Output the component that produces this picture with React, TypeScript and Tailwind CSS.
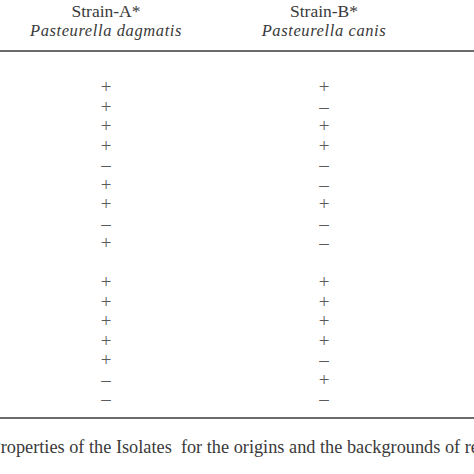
const groupOne = [
  ['+', '+'],
  ['+', '–'],
  ['+', '+'],
  ['+', '+'],
  ['–', '–'],
  ['+', '–'],
  ['+', '+'],
  ['–', '–'],
  ['+', '–'],
];

const groupTwo = [
  ['+', '+'],
  ['+', '+'],
  ['+', '+'],
  ['+', '+'],
  ['+', '–'],
  ['–', '+'],
  ['–', '–'],
];

const serif = { fontFamily: '"Liberation Serif", "DejaVu Serif", serif' };

function Row({ a, b }: { a: string; b: string }) {
  return (
    <div className="grid grid-cols-[212px_224px] h-[19.5px] items-center text-[19px] leading-[19.5px] text-[#5a5a5a]">
      <span className="text-center">{a}</span>
      <span className="text-center">{b}</span>
    </div>
  );
}

export default function App() {
  return (
    <div className="w-[474px] h-[474px] bg-white overflow-hidden" style={serif}>
      <div className="grid grid-cols-[212px_224px] pt-[1px] h-[50px] text-[#3a3a3a]">
        <div className="flex flex-col items-center">
          <span className="text-[17.5px] leading-[20px]">Strain-A*</span>
          <span className="text-[16.5px] leading-[19px] italic tracking-[0.6px]">Pasteurella dagmatis</span>
        </div>
        <div className="flex flex-col items-center">
          <span className="text-[17.5px] leading-[20px]">Strain-B*</span>
          <span className="text-[16.5px] leading-[19px] italic tracking-[0.6px]">Pasteurella canis</span>
        </div>
      </div>
      <div className="h-[2px] bg-[#6b6b6b]" />
      <div className="pt-[25px] pb-[8px]">
        {groupOne.map(([a, b], i) => (
          <Row key={'a' + i} a={a} b={b} />
        ))}
        <div className="h-[19.5px]" />
        {groupTwo.map(([a, b], i) => (
          <Row key={'b' + i} a={a} b={b} />
        ))}
      </div>
      <div className="h-[2px] bg-[#6b6b6b]" />
      <p className="mt-[18px] -ml-[9.5px] whitespace-nowrap text-[18.3px] leading-[20px] text-[#3a3a3a]">
        Properties of the Isolates&nbsp; for the origins and the backgrounds of reference strains
      </p>
    </div>
  );
}
